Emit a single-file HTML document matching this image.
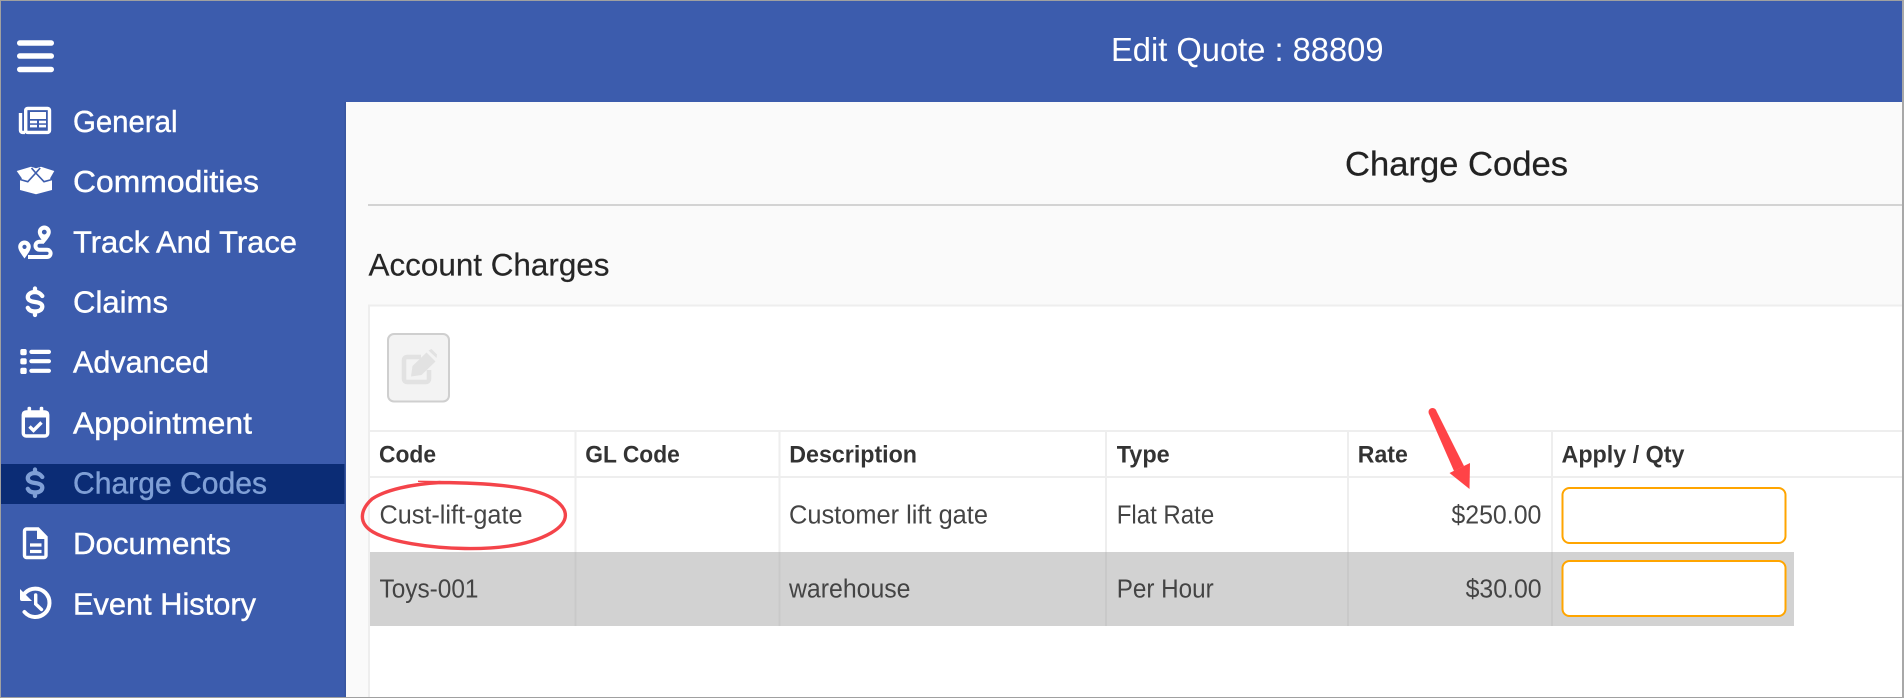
<!DOCTYPE html>
<html lang="en">
<head>
<meta charset="utf-8">
<title>Edit Quote : 88809</title>
<style>
html,body{margin:0;padding:0;width:1904px;height:698px;overflow:hidden;background:#fafafa}
svg{display:block}
text{font-family:"Liberation Sans",Arial,sans-serif}
.nav{font-size:30.5px;fill:#fff;stroke:#fff;stroke-width:.4px}
.th{font-size:24px;font-weight:bold;fill:#333}
.td{font-size:25.5px;fill:#444}
</style>
</head>
<body>
<svg width="1904" height="698" viewBox="0 0 1904 698" xmlns="http://www.w3.org/2000/svg">
<!-- backgrounds -->
<rect width="1904" height="698" fill="#fafafa"/>
<rect width="1904" height="102" fill="#3c5cad"/>
<rect width="346" height="698" fill="#3c5cad"/>
<rect x="344.500" y="102" width="1.500" height="596" fill="#38569f"/>
<rect x="1" y="464" width="343.500" height="40" fill="#0b2c75"/>

<!-- header -->
<text x="1111" y="61" font-size="33" fill="#fff" textLength="272.500" lengthAdjust="spacingAndGlyphs">Edit Quote : 88809</text>

<!-- hamburger -->
<g fill="#fff">
<rect x="17" y="40.300" width="37" height="5.500" rx="2.700"/>
<rect x="17" y="53.300" width="37" height="5.500" rx="2.700"/>
<rect x="17" y="66.700" width="37" height="5.500" rx="2.700"/>
</g>

<!-- nav text -->
<text class="nav" x="73" y="132" textLength="104.500" lengthAdjust="spacingAndGlyphs">General</text>
<text class="nav" x="73" y="191.800" textLength="186" lengthAdjust="spacingAndGlyphs">Commodities</text>
<text class="nav" x="73" y="252.700" textLength="224" lengthAdjust="spacingAndGlyphs">Track And Trace</text>
<text class="nav" x="73" y="312.700" textLength="95" lengthAdjust="spacingAndGlyphs">Claims</text>
<text class="nav" x="73" y="372.700" textLength="136" lengthAdjust="spacingAndGlyphs">Advanced</text>
<text class="nav" x="73" y="433.300" textLength="179" lengthAdjust="spacingAndGlyphs">Appointment</text>
<text class="nav" x="73" y="493.300" textLength="194" lengthAdjust="spacingAndGlyphs" style="fill:#7f9fd6;stroke:#7f9fd6">Charge Codes</text>
<text class="nav" x="73" y="554" textLength="158" lengthAdjust="spacingAndGlyphs">Documents</text>
<text class="nav" x="73" y="614.300" textLength="183" lengthAdjust="spacingAndGlyphs">Event History</text>

<!-- newspaper icon -->
<g fill="none" stroke="#fff" stroke-width="3.400">
<rect x="25.700" y="108.400" width="23.800" height="24" rx="2"/>
<path d="M25 132.400h-2.500a2 2 0 0 1-2-2V113"/>
</g>
<g fill="#fff">
<rect x="30" y="112" width="16" height="7"/>
<rect x="30" y="120.700" width="7" height="2.600"/>
<rect x="39" y="120.700" width="7" height="2.600"/>
<rect x="30" y="124.800" width="7" height="2.600"/>
<rect x="39" y="124.800" width="7" height="2.600"/>
</g>

<!-- box icon -->
<path d="M16.700 171L31 166.800L36 168.300L41 166.800L54.300 171L50 178.500L52 180V190L36 194.200L20 190V180L22 178.500Z" fill="#fff"/>
<path d="M20 179.500L27.800 181.700L35.800 173L44 181.700L52 179.500M31.500 168L35.800 173L40.200 168" fill="none" stroke="#3c5cad" stroke-width="1.600"/>

<!-- route icon -->
<g fill="#fff">
<path fill-rule="evenodd" d="M24.500 240.500a6.300 6.300 0 0 0-6.300 6.300c0 3.800 3.900 8.200 6.300 11.700 2.400-3.500 6.300-7.900 6.300-11.700a6.300 6.300 0 0 0-6.300-6.300zm0 4.300a2.100 2.100 0 1 1 0 4.200 2.100 2.100 0 0 1 0-4.200z"/>
<path fill-rule="evenodd" d="M44.300 225.500a6.500 6.500 0 0 0-6.500 6.500c0 3.800 4 7.900 6.500 11.200 2.500-3.300 6.500-7.400 6.500-11.200a6.500 6.500 0 0 0-6.500-6.500zm0 4.200a2.400 2.400 0 1 1 0 4.800 2.400 2.400 0 0 1 0-4.800z"/>
</g>
<path d="M44 241.800H39.500a4 4 0 0 0 0 8h7.500a3.500 3.500 0 0 1 0 7.200H28" fill="none" stroke="#fff" stroke-width="4"/>

<!-- dollar icons -->
<g fill="none" stroke="#fff" stroke-width="4.300" stroke-linecap="round">
<path d="M42.300 296C40.500 293.500 38 292 35 292C30.500 292 27.800 294.500 27.800 297C27.800 300 30 301.300 35 302C40 302.700 42.300 304 42.300 306.500C42.300 309.500 39.500 311.500 35 311.500C31 311.500 28.800 310 27.800 307.800"/>
<path d="M35 288.500V292M35 311.500V315"/>
</g>
<g fill="none" stroke="#7f9fd6" stroke-width="4.300" stroke-linecap="round" transform="translate(0 181)">
<path d="M42.300 296C40.500 293.500 38 292 35 292C30.500 292 27.800 294.500 27.800 297C27.800 300 30 301.300 35 302C40 302.700 42.300 304 42.300 306.500C42.300 309.500 39.500 311.500 35 311.500C31 311.500 28.800 310 27.800 307.800"/>
<path d="M35 288.500V292M35 311.500V315"/>
</g>

<!-- list icon -->
<g fill="#fff">
<rect x="20.300" y="349" width="6.400" height="6.200" rx="1.800"/>
<rect x="20.300" y="358.200" width="6.400" height="6.200" rx="1.800"/>
<rect x="20.300" y="367.800" width="6.400" height="6.200" rx="1.800"/>
<rect x="29.300" y="349.800" width="21.700" height="4.200" rx="2.100"/>
<rect x="29.300" y="359.100" width="21.700" height="4.200" rx="2.100"/>
<rect x="29.300" y="368.700" width="21.700" height="4.200" rx="2.100"/>
</g>

<!-- calendar icon -->
<rect x="23.300" y="412" width="24.400" height="24" rx="2.800" fill="none" stroke="#fff" stroke-width="3.400"/>
<g fill="#fff">
<rect x="22" y="411" width="27" height="6.500" rx="2.500"/>
<rect x="27.500" y="406.700" width="3.600" height="6" rx="1.500"/>
<rect x="39.700" y="406.700" width="3.600" height="6" rx="1.500"/>
</g>
<path d="M29.500 426.500l4 4 8-8" fill="none" stroke="#fff" stroke-width="3.400"/>

<!-- document icon -->
<path d="M26.500 529H38L46 537.200V555.500a2 2 0 0 1-2 2H26.500a2 2 0 0 1-2-2V531a2 2 0 0 1 2-2z" fill="none" stroke="#fff" stroke-width="3.400"/>
<path d="M37 529h2l8 8v2H37z" fill="#fff"/>
<path d="M30 545H41.500M30 551.500H41.500" fill="none" stroke="#fff" stroke-width="3.200"/>

<!-- history icon -->
<path d="M25 593A14.200 14.200 0 1 1 24.500 612" fill="none" stroke="#fff" stroke-width="4" stroke-linecap="round"/>
<path d="M20 589v10a2 2 0 0 0 2 2H32z" fill="#fff"/>
<path d="M35.700 595V604L41.500 609.500" fill="none" stroke="#fff" stroke-width="3.400" stroke-linecap="round"/>

<!-- page title -->
<text x="1345" y="175.700" font-size="34" fill="#222" stroke="#222" stroke-width=".25" textLength="223" lengthAdjust="spacingAndGlyphs">Charge Codes</text>
<rect x="368" y="204" width="1534" height="2" fill="#d3d3d3"/>
<text x="368.500" y="275.700" font-size="31.500" fill="#262626" stroke="#262626" stroke-width=".2" textLength="241" lengthAdjust="spacingAndGlyphs">Account Charges</text>

<!-- panel -->
<rect x="368" y="304.500" width="1534" height="394" fill="#eee"/>
<rect x="370" y="306.500" width="1532" height="392" fill="#fff"/>

<!-- edit button -->
<rect x="388" y="334" width="61" height="67.500" rx="6" fill="#f3f3f3" stroke="#cfcfcf" stroke-width="2"/>
<path d="M421 357H407a3 3 0 0 0-3 3V379a3 3 0 0 0 3 3H426a3 3 0 0 0 3-3V370" fill="none" stroke="#e2e2e2" stroke-width="4.500"/>
<path d="M411 376.500L412.500 366L426.500 352.500L435.500 361.500L421.500 375Z" fill="#e2e2e2"/>
<path d="M428.500 350.500L431.500 349L437 354.500L436.500 358Z" fill="#e2e2e2"/>

<!-- table lines -->
<rect x="370" y="430" width="1532" height="2" fill="#eee"/>
<rect x="370" y="476" width="1532" height="2" fill="#eee"/>
<rect x="370" y="552" width="1424" height="74" fill="#d2d2d2"/>
<g fill="#eee">
<rect x="574.500" y="432" width="2" height="120"/>
<rect x="778.500" y="432" width="2" height="120"/>
<rect x="1105" y="432" width="2" height="120"/>
<rect x="1347" y="432" width="2" height="120"/>
<rect x="1551" y="432" width="2" height="120"/>
</g>
<g fill="#c9c9c9">
<rect x="574.500" y="552" width="2" height="74"/>
<rect x="778.500" y="552" width="2" height="74"/>
<rect x="1105" y="552" width="2" height="74"/>
<rect x="1347" y="552" width="2" height="74"/>
<rect x="1551" y="552" width="2" height="74"/>
</g>

<!-- table header -->
<text class="th" x="379" y="462.700" textLength="57" lengthAdjust="spacingAndGlyphs">Code</text>
<text class="th" x="585.300" y="462.700" textLength="94.500" lengthAdjust="spacingAndGlyphs">GL Code</text>
<text class="th" x="789.300" y="462.700" textLength="127.700" lengthAdjust="spacingAndGlyphs">Description</text>
<text class="th" x="1116.700" y="462.700" textLength="53" lengthAdjust="spacingAndGlyphs">Type</text>
<text class="th" x="1357.800" y="462.700" textLength="50" lengthAdjust="spacingAndGlyphs">Rate</text>
<text class="th" x="1561.500" y="462.700" textLength="123" lengthAdjust="spacingAndGlyphs">Apply / Qty</text>

<!-- row 1 -->
<text class="td" x="379.500" y="523.300" textLength="143" lengthAdjust="spacingAndGlyphs">Cust-lift-gate</text>
<text class="td" x="789" y="523.300" textLength="199" lengthAdjust="spacingAndGlyphs">Customer lift gate</text>
<text class="td" x="1116.700" y="523.300" textLength="97.500" lengthAdjust="spacingAndGlyphs">Flat Rate</text>
<text class="td" x="1451.400" y="523.300" textLength="90" lengthAdjust="spacingAndGlyphs">$250.00</text>
<rect x="1562.500" y="488" width="223" height="55" rx="7" fill="#fff" stroke="#ffa500" stroke-width="2"/>

<!-- row 2 -->
<text class="td" x="379.500" y="597.300" textLength="99" lengthAdjust="spacingAndGlyphs">Toys-001</text>
<text class="td" x="789" y="597.300" textLength="121.500" lengthAdjust="spacingAndGlyphs">warehouse</text>
<text class="td" x="1116.700" y="597.300" textLength="97" lengthAdjust="spacingAndGlyphs">Per Hour</text>
<text class="td" x="1465.600" y="597.300" textLength="76" lengthAdjust="spacingAndGlyphs">$30.00</text>
<rect x="1562.500" y="561" width="223" height="55" rx="7" fill="#fff" stroke="#ffa500" stroke-width="2"/>

<!-- red annotations -->
<path d="M440 482.500C480 483 530 485 552 498C570 509 570 522 551 533C530 545 500 549 465 548.500C430 548 390 542 373 532C358 523 360 510 372 499C385 490 412 484 440 482.500" fill="none" stroke="#f4444a" stroke-width="3.400" stroke-linecap="round"/>
<path d="M418 481.300L445 481.700" fill="none" stroke="#f4444a" stroke-width="1.400"/>
<circle cx="1432.500" cy="412" r="4" fill="#ff4347"/>
<path d="M1428.800 413.500L1436.200 410.500L1464 466L1454 471Z" fill="#ff4347"/>
<path d="M1449.500 473L1470 463L1469.500 489Z" fill="#ff4347"/>

<!-- screenshot frame -->
<rect x="0" y="0" width="1904" height="1" fill="#a0a0a0"/>
<rect x="0" y="697" width="1904" height="1" fill="#a0a0a0"/>
<rect x="0" y="0" width="1" height="698" fill="#a0a0a0"/>
<rect x="1902" y="0" width="2" height="698" fill="#a8a8a8"/>
</svg>
</body>
</html>
